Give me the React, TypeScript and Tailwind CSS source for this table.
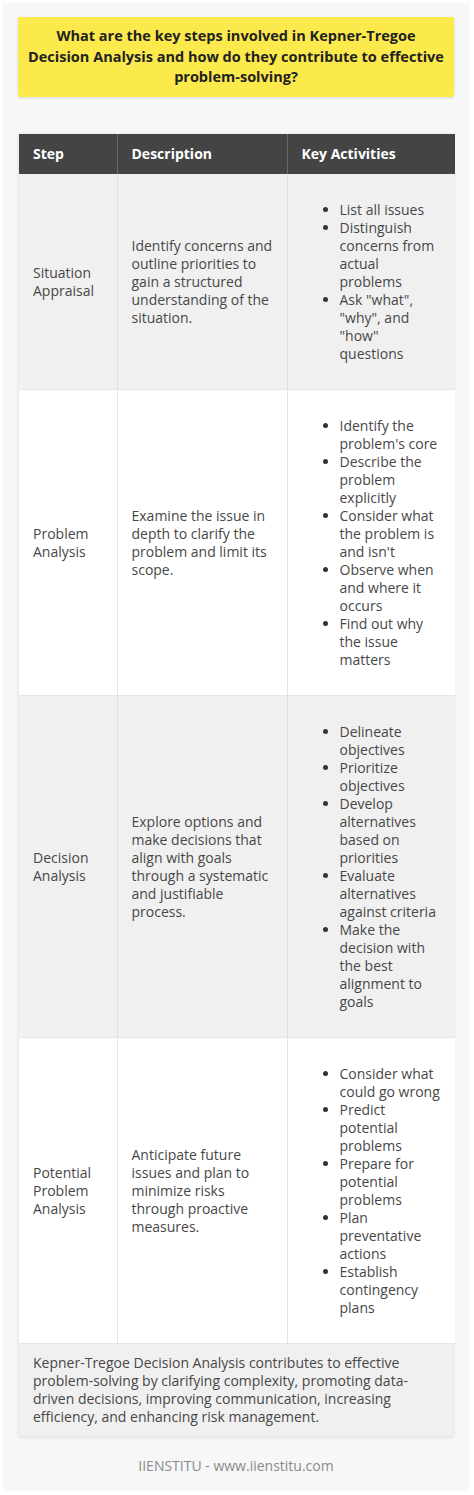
import React from "react";

type Row = { step: string[]; desc: string; items: string[]; grey: boolean };

const rows: Row[] = [
  {
    step: ["Situation", "Appraisal"],
    desc: "Identify concerns and outline priorities to gain a structured understanding of the situation.",
    items: ["List all issues", "Distinguish concerns from actual problems", 'Ask "what", "why", and "how" questions'],
    grey: true,
  },
  {
    step: ["Problem", "Analysis"],
    desc: "Examine the issue in depth to clarify the problem and limit its scope.",
    items: [
      "Identify the problem's core",
      "Describe the problem explicitly",
      "Consider what the problem is and isn't",
      "Observe when and where it occurs",
      "Find out why the issue matters",
    ],
    grey: false,
  },
  {
    step: ["Decision", "Analysis"],
    desc: "Explore options and make decisions that align with goals through a systematic and justifiable process.",
    items: [
      "Delineate objectives",
      "Prioritize objectives",
      "Develop alternatives based on priorities",
      "Evaluate alternatives against criteria",
      "Make the decision with the best alignment to goals",
    ],
    grey: true,
  },
  {
    step: ["Potential", "Problem", "Analysis"],
    desc: "Anticipate future issues and plan to minimize risks through proactive measures.",
    items: [
      "Consider what could go wrong",
      "Predict potential problems",
      "Prepare for potential problems",
      "Plan preventative actions",
      "Establish contingency plans",
    ],
    grey: false,
  },
];

export default function App() {
  return (
    <div
      className="bg-white w-[474px] h-[1495px] p-[3px]"
      style={{ fontFamily: '"Open Sans", "Noto Sans", sans-serif' }}
    >
      <div className="bg-[#f7f7f7] w-[466px] h-[1488px] pt-[14px]">
        <div className="mx-[15px] h-[80px] bg-[#fce94c] rounded-[2px] shadow-[0_1px_3px_rgba(0,0,0,0.12)] flex items-center justify-center px-[8px]">
          <h1 className="text-center font-bold text-[14.5px] leading-[20.5px] text-[#222]">
            What are the key steps involved in Kepner-Tregoe Decision Analysis and how do they contribute to effective
            problem-solving?
          </h1>
        </div>

        <div className="mx-[16px] mt-[37px] shadow-[0_1px_4px_rgba(0,0,0,0.12)]">
          <table className="w-[436px] table-fixed border-collapse text-[14px] leading-[18px] text-[#474747]">
            <colgroup>
              <col className="w-[98px]" />
              <col className="w-[170px]" />
              <col className="w-[168px]" />
            </colgroup>
            <thead>
              <tr className="bg-[#444444] text-white h-[40px]">
                <th className="text-left font-bold text-[14px] px-[14px] border-r border-[#6a6a6a]">Step</th>
                <th className="text-left font-bold text-[14px] px-[14px] border-r border-[#6a6a6a]">Description</th>
                <th className="text-left font-bold text-[14px] px-[14px]">Key Activities</th>
              </tr>
            </thead>
            <tbody>
              {rows.map((r, i) => (
                <tr
                  key={i}
                  className={`${r.grey ? "bg-[#f0f0f0]" : "bg-white"} border-b border-[#e6e6e6]`}
                >
                  <td className="align-middle px-[14px] py-[14px] border-r border-[#e2e2e2]">
                    {r.step.map((s, j) => (
                      <div key={j}>{s}</div>
                    ))}
                  </td>
                  <td className="align-middle pl-[14px] pr-[12px] py-[14px] border-r border-[#e2e2e2]">{r.desc}</td>
                  <td className="align-middle pl-[14px] pr-[12px] py-[14px]">
                    <ul className="list-disc pl-[38px] my-[12.5px] marker:text-[#333]">
                      {r.items.map((it, j) => (
                        <li key={j}>{it}</li>
                      ))}
                    </ul>
                  </td>
                </tr>
              ))}
            </tbody>
          </table>
          <div className="bg-[#f0f0f0] px-[14px] py-[10px] text-[14px] leading-[18px] text-[#474747]">
            Kepner-Tregoe Decision Analysis contributes to effective problem-solving by clarifying complexity, promoting
            data-driven decisions, improving communication, increasing efficiency, and enhancing risk management.
          </div>
        </div>

        <div className="mt-[20px] text-center text-[14px] leading-[20px] text-[#8a8a8a]">
          IIENSTITU - www.iienstitu.com
        </div>
      </div>
    </div>
  );
}
